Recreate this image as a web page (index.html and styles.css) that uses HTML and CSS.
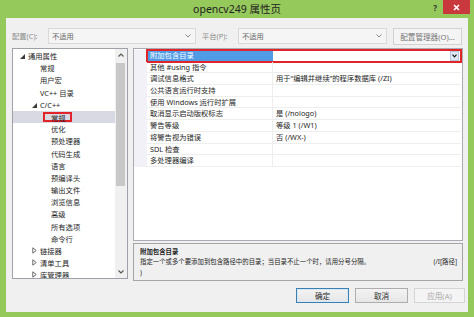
FILE: index.html
```html
<!DOCTYPE html>
<html lang="zh-CN">
<head>
    <meta charset="UTF-8">
    <title>opencv249 属性页</title>
    <link rel="stylesheet" href="styles.css">
</head>
<body>
    <div class="window">
        <div class="titlebar">
            <span class="title">opencv249 属性页</span>
            <div class="title-tools">
                <span class="help">?</span>
                <span class="close">
                    <svg width="7" height="7" viewBox="0 0 7 7"><path d="M1 1 L6 6 M6 1 L1 6" stroke="#fff" stroke-width="1.6"/></svg>
                </span>
            </div>
        </div>

        <div class="client">
            <!-- config / platform row -->
            <div class="config-row">
                <span class="config-label">配置(C):</span>
                <div class="combo combo--config">
                    <span>不适用</span>
                    <svg class="chevron" width="6" height="4" viewBox="0 0 6 4"><path d="M0.5 0.5 L3 3 L5.5 0.5" fill="none" stroke="#8a8a8a"/></svg>
                </div>
                <span class="config-label config-label--platform">平台(P):</span>
                <div class="combo combo--platform">
                    <span>不适用</span>
                    <svg class="chevron" width="6" height="4" viewBox="0 0 6 4"><path d="M0.5 0.5 L3 3 L5.5 0.5" fill="none" stroke="#8a8a8a"/></svg>
                </div>
                <button class="btn btn--manager">配置管理器(O)...</button>
            </div>

            <div class="main">
                <!-- left tree -->
                <div class="tree">
                    <div class="tree__list">
                        <div class="tree__row lvl0"><span class="twisty"><svg width="5" height="5" viewBox="0 0 5 5"><path d="M5 0 V5 H0 Z" fill="#3a3a3a"/></svg></span>通用属性</div>
                        <div class="tree__row lvl1">常规</div>
                        <div class="tree__row lvl1">用户宏</div>
                        <div class="tree__row lvl1">VC++ 目录</div>
                        <div class="tree__row lvl1 has-twisty"><span class="twisty"><svg width="5" height="5" viewBox="0 0 5 5"><path d="M5 0 V5 H0 Z" fill="#3a3a3a"/></svg></span>C/C++</div>
                        <div class="tree__row lvl2 is-selected"><span class="marked">常规</span></div>
                        <div class="tree__row lvl2">优化</div>
                        <div class="tree__row lvl2">预处理器</div>
                        <div class="tree__row lvl2">代码生成</div>
                        <div class="tree__row lvl2">语言</div>
                        <div class="tree__row lvl2">预编译头</div>
                        <div class="tree__row lvl2">输出文件</div>
                        <div class="tree__row lvl2">浏览信息</div>
                        <div class="tree__row lvl2">高级</div>
                        <div class="tree__row lvl2">所有选项</div>
                        <div class="tree__row lvl2">命令行</div>
                        <div class="tree__row lvl1 has-twisty"><span class="twisty"><svg width="5" height="7" viewBox="0 0 5 7"><path d="M0.8 0.8 L4.2 3.5 L0.8 6.2 Z" fill="none" stroke="#5a5a5a" stroke-width="0.9"/></svg></span>链接器</div>
                        <div class="tree__row lvl1 has-twisty"><span class="twisty"><svg width="5" height="7" viewBox="0 0 5 7"><path d="M0.8 0.8 L4.2 3.5 L0.8 6.2 Z" fill="none" stroke="#5a5a5a" stroke-width="0.9"/></svg></span>清单工具</div>
                        <div class="tree__row lvl1 has-twisty"><span class="twisty"><svg width="5" height="7" viewBox="0 0 5 7"><path d="M0.8 0.8 L4.2 3.5 L0.8 6.2 Z" fill="none" stroke="#5a5a5a" stroke-width="0.9"/></svg></span>库管理器</div>
                    </div>
                    <div class="scrollbar">
                        <svg class="scroll-arrow" width="6" height="4" viewBox="0 0 6 4"><path d="M0.5 3.5 L3 1 L5.5 3.5" fill="none" stroke="#555" stroke-width="1.1"/></svg>
                        <div class="scroll-thumb"></div>
                        <svg class="scroll-arrow scroll-arrow--down" width="6" height="4" viewBox="0 0 6 4"><path d="M0.5 0.5 L3 3 L5.5 0.5" fill="none" stroke="#555" stroke-width="1.1"/></svg>
                    </div>
                </div>

                <div class="right">
                    <!-- property grid -->
                    <div class="grid">
                        <div class="grid__row is-selected">
                            <span class="gutter"></span>
                            <div class="cells">
                                <span class="name">附加包含目录</span>
                                <span class="value value--drop">
                                    <span class="drop">
                                        <svg width="5" height="4" viewBox="0 0 5 4"><path d="M0.5 0.7 L2.5 2.8 L4.5 0.7" fill="none" stroke="#1a1a1a" stroke-width="1.2"/></svg>
                                    </span>
                                </span>
                            </div>
                        </div>
                        <div class="grid__row"><span class="gutter"></span><div class="cells"><span class="name">其他 #using 指令</span><span class="value"></span></div></div>
                        <div class="grid__row"><span class="gutter"></span><div class="cells"><span class="name">调试信息格式</span><span class="value">用于“编辑并继续”的程序数据库 (/ZI)</span></div></div>
                        <div class="grid__row"><span class="gutter"></span><div class="cells"><span class="name">公共语言运行时支持</span><span class="value"></span></div></div>
                        <div class="grid__row"><span class="gutter"></span><div class="cells"><span class="name">使用 Windows 运行时扩展</span><span class="value"></span></div></div>
                        <div class="grid__row"><span class="gutter"></span><div class="cells"><span class="name">取消显示启动版权标志</span><span class="value">是 (/nologo)</span></div></div>
                        <div class="grid__row"><span class="gutter"></span><div class="cells"><span class="name">警告等级</span><span class="value">等级 1 (/W1)</span></div></div>
                        <div class="grid__row"><span class="gutter"></span><div class="cells"><span class="name">将警告视为错误</span><span class="value">否 (/WX-)</span></div></div>
                        <div class="grid__row"><span class="gutter"></span><div class="cells"><span class="name">SDL 检查</span><span class="value"></span></div></div>
                        <div class="grid__row"><span class="gutter"></span><div class="cells"><span class="name">多处理器编译</span><span class="value"></span></div></div>
                    </div>

                    <!-- description -->
                    <div class="desc">
                        <div class="desc__title">附加包含目录</div>
                        <div class="desc__line">
                            <span>指定一个或多个要添加到包含路径中的目录；当目录不止一个时，请用分号分隔。</span>
                            <span>(/I[路径]</span>
                        </div>
                        <div class="desc__line">)</div>
                    </div>
                </div>
            </div>

            <div class="actions">
                <button class="btn btn--default">确定</button>
                <button class="btn">取消</button>
                <button class="btn btn--disabled">应用(A)</button>
            </div>
        </div>
    </div>
</body>
</html>
```

FILE: styles.css
```css
*, *::after, *::before {
    margin: 0;
    padding: 0;
    box-sizing: border-box;
}

body {
    width: 474px;
    height: 317px;
    overflow: hidden;
    font-family: "Noto Sans", "Noto Sans CJK SC", sans-serif;
    font-size: 7.3px;
    color: #1e1e1e;
    background-color: #96c95c;
}

.window {
    width: 474px;
    height: 317px;
    display: flex;
    flex-direction: column;
    padding: 0 6px 5px;
    background-color: #96c95c;
}

/* Title bar */
.titlebar {
    height: 18px;
    margin: 0 -6px;
    display: grid;
    grid-template-columns: 1fr auto 1fr;
    align-items: start;
}

.title {
    grid-column: 2;
    font-size: 10.5px;
    line-height: 19px;
    color: #222;
}

.title-tools {
    grid-column: 3;
    display: flex;
    justify-content: flex-end;
    align-items: flex-start;
}

.help {
    font-size: 8px;
    font-weight: 700;
    line-height: 15px;
    color: #333;
    margin-right: 6px;
}

.close {
    width: 27px;
    height: 14px;
    margin-right: 4px;
    background-color: #c9383c;
    display: flex;
    justify-content: center;
    align-items: center;
}

/* Client */
.client {
    flex: 1;
    display: flex;
    flex-direction: column;
    padding: 10px 3px 0 6px;
    background-color: #f0f0f0;
}

.config-row {
    height: 16px;
    display: flex;
    align-items: center;
}

.config-label {
    width: 36px;
    color: #8c8c8c;
}

.config-label--platform {
    margin-left: 6px;
}

.combo {
    height: 16px;
    padding: 0 4px 0 3px;
    display: flex;
    align-items: center;
    justify-content: space-between;
    border: 1px solid #d9d9d9;
    background-color: #f5f5f5;
    color: #6a6a6a;
}

.combo--config {
    width: 148px;
}

.combo--platform {
    width: 149px;
}

.btn {
    width: 53px;
    height: 15px;
    font-family: inherit;
    font-size: 7.6px;
    color: #2a2a2a;
    border: 1px solid #adadad;
    background: linear-gradient(#f3f3f3, #e6e6e6);
}

.btn--manager {
    width: 69px;
    height: 17px;
    margin-left: 6px;
    color: #777;
    border-color: #d2d2d2;
    background: #f4f4f4;
}

/* Main area */
.main {
    margin-top: 4px;
    height: 233px;
    display: flex;
    gap: 5px;
}

.tree {
    width: 116px;
    height: 231px;
    display: flex;
    border: 1px solid #9ea2a8;
    background-color: #fff;
}

.tree__list {
    flex: 1;
    padding-top: 1px;
    overflow: hidden;
}

.tree__row {
    height: 12.2px;
    line-height: 12.2px;
    white-space: nowrap;
    color: #1e1e1e;
}

.twisty {
    display: inline-block;
    width: 8px;
}

.lvl0 {
    padding-left: 7px;
}

.lvl1 {
    padding-left: 27px;
}

.lvl1.has-twisty {
    padding-left: 19px;
}

.lvl2 {
    padding-left: 38px;
}

.tree__row.is-selected {
    padding-left: 30px;
    background-color: #d9d9e4;
}

.marked {
    display: inline-block;
    height: 10.5px;
    line-height: 8px;
    padding: 0 4px 0 6px;
    border: 2px solid #e0242a;
    vertical-align: top;
    margin-top: 1px;
}

.scrollbar {
    width: 12px;
    display: flex;
    flex-direction: column;
    align-items: center;
    padding: 4px 0 4px;
    background-color: #f0f0f0;
}

.scroll-thumb {
    width: 9px;
    height: 123px;
    margin: 6px 0 0 -2px;
    background-color: #c8c8c8;
}

.scroll-arrow--down {
    margin-top: auto;
}

/* Property grid */
.right {
    width: 330px;
    display: flex;
    flex-direction: column;
    gap: 2px;
}

.grid {
    height: 193px;
    padding: 1px 1px 0 0;
    border: 1px solid #a9acb2;
    background-color: #fff;
}

.grid__row {
    height: 11.7px;
    display: flex;
}

.gutter {
    width: 13px;
    background-color: #f1f1f7;
}

.cells {
    flex: 1;
    display: grid;
    grid-template-columns: 126px 1fr;
    border-bottom: 1px solid #eeeeee;
}

.name {
    padding-left: 3px;
    line-height: 11px;
    white-space: nowrap;
    border-right: 1px solid #eeeeee;
}

.value {
    padding-left: 3px;
    line-height: 11px;
    white-space: nowrap;
}

.value--drop {
    display: flex;
    justify-content: flex-end;
}

.grid__row.is-selected .cells {
    outline: 2px solid #e0242a;
    outline-offset: -1px;
    border-bottom-color: transparent;
}

.grid__row.is-selected .name {
    background-color: #4f9be6;
    color: #fff;
    border-right: none;
}

.drop {
    width: 9px;
    height: 10px;
    margin: 1px 2px 0 0;
    display: flex;
    justify-content: center;
    align-items: center;
    border: 1px solid #b5c8e0;
    background-color: #dde9f7;
}

/* Description */
.desc {
    height: 38px;
    padding: 3px 5px 0 6px;
    font-size: 6.4px;
    line-height: 10.5px;
    border: 1px solid #a5a5a5;
    background-color: #f0f0f0;
}

.desc__title {
    font-weight: 700;
    line-height: 10px;
}

.desc__line {
    display: flex;
    justify-content: space-between;
}

/* Bottom buttons */
.actions {
    margin-top: 7px;
    display: flex;
    justify-content: flex-end;
    gap: 6px;
}

.btn--default {
    border-color: #3c7fb1;
    box-shadow: inset 0 0 0 1px #d6e8f5;
}

.btn--disabled {
    width: 51px;
    color: #a8a8a8;
    border-color: #d5d5d5;
    background: #f4f4f4;
}
```
